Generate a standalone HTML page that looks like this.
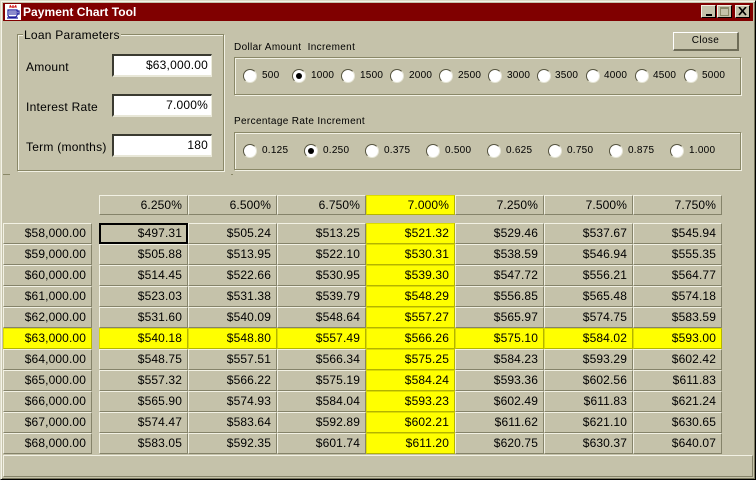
<!DOCTYPE html>
<html><head><meta charset="utf-8"><style>
html,body{margin:0;padding:0;background:#c5c2aa}
body{width:756px;height:480px;position:relative;overflow:hidden;font-family:"Liberation Sans",Arial,sans-serif;font-size:12px;color:#000;-webkit-font-smoothing:none}
div,span{box-sizing:border-box}
.a{position:absolute;white-space:pre}
.win{position:absolute;left:0;top:0;width:756px;height:480px;border-top:1px solid #dcdac6;border-left:1px solid #dcdac6;border-right:1px solid #000;border-bottom:1px solid #000;box-shadow:inset 1px 1px 0 #f4f3e8,inset -1px -1px 0 #77755d}
.tb{position:absolute;left:3px;top:3px;width:750px;height:18px;background:#800000}
.grp{position:absolute;border:1px solid #8a8868;box-shadow:1px 1px 0 #f2f1e4,inset 1px 1px 0 #f2f1e4}
.fld{position:absolute;left:112px;width:100px;height:23px;background:#fff;border-top:2px solid #3a3a30;border-left:2px solid #3a3a30;border-right:1px solid #ecebdc;border-bottom:2px solid #e8e7d8;text-align:right;padding-right:3px;line-height:18px;font-size:12px;letter-spacing:.2px}
.lb{font-size:12px;line-height:14px;letter-spacing:.25px}
.sm{font-size:10px;line-height:12px;letter-spacing:.35px}
.r{position:absolute;width:14px;height:14px;border-radius:50%;background:#fff;border:1px solid #55533f;border-right-color:#e6e5d6;border-bottom-color:#e6e5d6}
.r.on::after{content:"";position:absolute;left:3px;top:3px;width:6px;height:6px;border-radius:50%;background:#000}
.rt{position:absolute;font-size:10px;line-height:12px;letter-spacing:.25px}
.c{position:absolute;width:89px;height:21px;background:#c5c2aa;border-top:1px solid #f2f1e4;border-left:1px solid #f2f1e4;border-right:1px solid #85836a;border-bottom:1px solid #85836a;text-align:right;padding-right:5px;line-height:18px;font-size:12px;letter-spacing:.12px}
.h{height:20px}
.y{background:#ff0;border-color:#dcdc00 #b4b400 #b4b400 #dcdc00}
.s{border:2px solid #000;padding-right:4px;line-height:17px}
.wb{position:absolute;top:5px;width:15px;height:13px;background:#c5c2aa;border-top:1px solid #f2f1e4;border-left:1px solid #f2f1e4;border-right:1px solid #000;border-bottom:1px solid #000}
</style></head><body>
<div class="win"></div>
<div class="tb"></div>
<svg class="a" style="left:5px;top:4px" width="16" height="16" viewBox="0 0 16 16"><rect width="16" height="16" fill="#fff"/><path d="M5 1l1 2M8 1v3M11 1l-1 2M4 3h8" stroke="#d01010" stroke-width="1" fill="none"/><path d="M3 6h9v5a2 2 0 0 1-2 2H5a2 2 0 0 1-2-2zM12 7h2v3h-2M2 14h11" stroke="#1a1a9a" stroke-width="1.2" fill="#fff"/><path d="M4 8h7M4 10h7" stroke="#1a1a9a" stroke-width="1"/></svg>
<span class="a" style="left:23px;top:5px;color:#fff;font-weight:bold;font-size:12px;line-height:14px;letter-spacing:.05px">Payment Chart Tool</span>
<div class="wb" style="left:701px"><span class="a" style="left:4px;top:8px;width:6px;height:2px;background:#000"></span></div>
<div class="wb" style="left:717px"><span class="a" style="left:2px;top:1px;width:9px;height:9px;border:1px solid #8a8868;border-top-width:2px"></span></div>
<div class="wb" style="left:735px"><svg class="a" style="left:2px;top:1px" width="10" height="9"><path d="M1 0l7 8M8 0L1 8" stroke="#000" stroke-width="1.7"/></svg></div>

<div class="a" style="left:3px;top:174px;width:7px;height:1px;background:#8a8868"></div>
<div class="a" style="left:231px;top:174px;width:2px;height:1px;background:#8a8868"></div>

<div class="grp" style="left:17px;top:34px;width:207px;height:137px"></div>
<span class="a" style="left:23px;top:28px;background:#c5c2aa;padding:0 1px;font-size:12px;line-height:14px;letter-spacing:.25px">Loan Parameters</span>
<span class="a lb" style="left:26px;top:60px">Amount</span>
<span class="a lb" style="left:26px;top:100px">Interest Rate</span>
<span class="a lb" style="left:26px;top:140px">Term (months)</span>
<div class="fld" style="top:54px">$63,000.00</div>
<div class="fld" style="top:94px">7.000%</div>
<div class="fld" style="top:134px">180</div>

<span class="a sm" style="left:234px;top:42px">Dollar Amount  Increment</span>
<div class="grp" style="left:234px;top:57px;width:507px;height:38px"></div>
<span class="a sm" style="left:234px;top:116px">Percentage Rate Increment</span>
<div class="grp" style="left:234px;top:132px;width:507px;height:38px"></div>

<div class="a" style="left:673px;top:32px;width:66px;height:19px;border-top:1px solid #fff;border-left:1px solid #fff;border-right:2px solid #6f6d58;border-bottom:2px solid #6f6d58;text-align:center;font-size:10px;line-height:16px;letter-spacing:.4px">Close</div>

<div class="r" style="left:243px;top:69px"></div><span class="rt" style="left:262px;top:70px">500</span>
<div class="r on" style="left:292px;top:69px"></div><span class="rt" style="left:311px;top:70px">1000</span>
<div class="r" style="left:341px;top:69px"></div><span class="rt" style="left:360px;top:70px">1500</span>
<div class="r" style="left:390px;top:69px"></div><span class="rt" style="left:409px;top:70px">2000</span>
<div class="r" style="left:439px;top:69px"></div><span class="rt" style="left:458px;top:70px">2500</span>
<div class="r" style="left:488px;top:69px"></div><span class="rt" style="left:507px;top:70px">3000</span>
<div class="r" style="left:537px;top:69px"></div><span class="rt" style="left:555px;top:70px">3500</span>
<div class="r" style="left:586px;top:69px"></div><span class="rt" style="left:604px;top:70px">4000</span>
<div class="r" style="left:635px;top:69px"></div><span class="rt" style="left:653px;top:70px">4500</span>
<div class="r" style="left:684px;top:69px"></div><span class="rt" style="left:702px;top:70px">5000</span>

<div class="r" style="left:243px;top:144px"></div><span class="rt" style="left:262px;top:145px">0.125</span>
<div class="r on" style="left:304px;top:144px"></div><span class="rt" style="left:323px;top:145px">0.250</span>
<div class="r" style="left:365px;top:144px"></div><span class="rt" style="left:384px;top:145px">0.375</span>
<div class="r" style="left:426px;top:144px"></div><span class="rt" style="left:445px;top:145px">0.500</span>
<div class="r" style="left:487px;top:144px"></div><span class="rt" style="left:506px;top:145px">0.625</span>
<div class="r" style="left:548px;top:144px"></div><span class="rt" style="left:567px;top:145px">0.750</span>
<div class="r" style="left:609px;top:144px"></div><span class="rt" style="left:628px;top:145px">0.875</span>
<div class="r" style="left:670px;top:144px"></div><span class="rt" style="left:689px;top:145px">1.000</span>

<div class="c h" style="left:99px;top:195px">6.250%</div>
<div class="c h" style="left:188px;top:195px">6.500%</div>
<div class="c h" style="left:277px;top:195px">6.750%</div>
<div class="c h y" style="left:366px;top:195px">7.000%</div>
<div class="c h" style="left:455px;top:195px">7.250%</div>
<div class="c h" style="left:544px;top:195px">7.500%</div>
<div class="c h" style="left:633px;top:195px">7.750%</div>

<div class="c" style="left:3px;top:223px">$58,000.00</div><div class="c s" style="left:99px;top:223px">$497.31</div><div class="c" style="left:188px;top:223px">$505.24</div><div class="c" style="left:277px;top:223px">$513.25</div><div class="c y" style="left:366px;top:223px">$521.32</div><div class="c" style="left:455px;top:223px">$529.46</div><div class="c" style="left:544px;top:223px">$537.67</div><div class="c" style="left:633px;top:223px">$545.94</div>
<div class="c" style="left:3px;top:244px">$59,000.00</div><div class="c" style="left:99px;top:244px">$505.88</div><div class="c" style="left:188px;top:244px">$513.95</div><div class="c" style="left:277px;top:244px">$522.10</div><div class="c y" style="left:366px;top:244px">$530.31</div><div class="c" style="left:455px;top:244px">$538.59</div><div class="c" style="left:544px;top:244px">$546.94</div><div class="c" style="left:633px;top:244px">$555.35</div>
<div class="c" style="left:3px;top:265px">$60,000.00</div><div class="c" style="left:99px;top:265px">$514.45</div><div class="c" style="left:188px;top:265px">$522.66</div><div class="c" style="left:277px;top:265px">$530.95</div><div class="c y" style="left:366px;top:265px">$539.30</div><div class="c" style="left:455px;top:265px">$547.72</div><div class="c" style="left:544px;top:265px">$556.21</div><div class="c" style="left:633px;top:265px">$564.77</div>
<div class="c" style="left:3px;top:286px">$61,000.00</div><div class="c" style="left:99px;top:286px">$523.03</div><div class="c" style="left:188px;top:286px">$531.38</div><div class="c" style="left:277px;top:286px">$539.79</div><div class="c y" style="left:366px;top:286px">$548.29</div><div class="c" style="left:455px;top:286px">$556.85</div><div class="c" style="left:544px;top:286px">$565.48</div><div class="c" style="left:633px;top:286px">$574.18</div>
<div class="c" style="left:3px;top:307px">$62,000.00</div><div class="c" style="left:99px;top:307px">$531.60</div><div class="c" style="left:188px;top:307px">$540.09</div><div class="c" style="left:277px;top:307px">$548.64</div><div class="c y" style="left:366px;top:307px">$557.27</div><div class="c" style="left:455px;top:307px">$565.97</div><div class="c" style="left:544px;top:307px">$574.75</div><div class="c" style="left:633px;top:307px">$583.59</div>
<div class="c y" style="left:3px;top:328px">$63,000.00</div><div class="c y" style="left:99px;top:328px">$540.18</div><div class="c y" style="left:188px;top:328px">$548.80</div><div class="c y" style="left:277px;top:328px">$557.49</div><div class="c y" style="left:366px;top:328px">$566.26</div><div class="c y" style="left:455px;top:328px">$575.10</div><div class="c y" style="left:544px;top:328px">$584.02</div><div class="c y" style="left:633px;top:328px">$593.00</div>
<div class="c" style="left:3px;top:349px">$64,000.00</div><div class="c" style="left:99px;top:349px">$548.75</div><div class="c" style="left:188px;top:349px">$557.51</div><div class="c" style="left:277px;top:349px">$566.34</div><div class="c y" style="left:366px;top:349px">$575.25</div><div class="c" style="left:455px;top:349px">$584.23</div><div class="c" style="left:544px;top:349px">$593.29</div><div class="c" style="left:633px;top:349px">$602.42</div>
<div class="c" style="left:3px;top:370px">$65,000.00</div><div class="c" style="left:99px;top:370px">$557.32</div><div class="c" style="left:188px;top:370px">$566.22</div><div class="c" style="left:277px;top:370px">$575.19</div><div class="c y" style="left:366px;top:370px">$584.24</div><div class="c" style="left:455px;top:370px">$593.36</div><div class="c" style="left:544px;top:370px">$602.56</div><div class="c" style="left:633px;top:370px">$611.83</div>
<div class="c" style="left:3px;top:391px">$66,000.00</div><div class="c" style="left:99px;top:391px">$565.90</div><div class="c" style="left:188px;top:391px">$574.93</div><div class="c" style="left:277px;top:391px">$584.04</div><div class="c y" style="left:366px;top:391px">$593.23</div><div class="c" style="left:455px;top:391px">$602.49</div><div class="c" style="left:544px;top:391px">$611.83</div><div class="c" style="left:633px;top:391px">$621.24</div>
<div class="c" style="left:3px;top:412px">$67,000.00</div><div class="c" style="left:99px;top:412px">$574.47</div><div class="c" style="left:188px;top:412px">$583.64</div><div class="c" style="left:277px;top:412px">$592.89</div><div class="c y" style="left:366px;top:412px">$602.21</div><div class="c" style="left:455px;top:412px">$611.62</div><div class="c" style="left:544px;top:412px">$621.10</div><div class="c" style="left:633px;top:412px">$630.65</div>
<div class="c" style="left:3px;top:433px">$68,000.00</div><div class="c" style="left:99px;top:433px">$583.05</div><div class="c" style="left:188px;top:433px">$592.35</div><div class="c" style="left:277px;top:433px">$601.74</div><div class="c y" style="left:366px;top:433px">$611.20</div><div class="c" style="left:455px;top:433px">$620.75</div><div class="c" style="left:544px;top:433px">$630.37</div><div class="c" style="left:633px;top:433px">$640.07</div>

<div class="a" style="left:3px;top:455px;width:750px;height:22px;border-top:1px solid #f2f1e4;border-left:1px solid #f2f1e4;border-right:1px solid #85836a;border-bottom:1px solid #85836a"></div>
</body></html>
